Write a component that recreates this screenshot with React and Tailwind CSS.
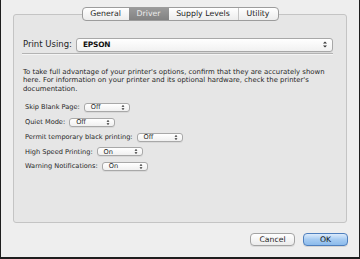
import React from "react";

const font = { fontFamily: '"DejaVu Sans", "Liberation Sans", sans-serif' };

function Arrows({ className = "" }) {
  return (
    <svg width="4" height="7" viewBox="0 0 4 7" className={className}>
      <path d="M0 2.6 L2 0.4 L4 2.6 Z" fill="#333" />
      <path d="M0 4.4 L2 6.6 L4 4.4 Z" fill="#333" />
    </svg>
  );
}

function SmallPopup({ value, width = "w-[46px]" }) {
  return (
    <div
      className={`${width} h-[9px] ml-[4px] flex items-center justify-between pl-[6px] pr-[4px] rounded-[3px] border border-[#a8a8a8] bg-gradient-to-b from-[#ffffff] to-[#f0f0f0] shadow-[0_1px_0_rgba(0,0,0,0.06)]`}
    >
      <span className="text-[6.6px] leading-none text-[#222]">{value}</span>
      <Arrows className="scale-[0.8]" />
    </div>
  );
}

function Row({ label, value }) {
  return (
    <div className="h-[14.7px] flex items-center">
      <span className="text-[6.6px] leading-none text-[#262626]">{label}</span>
      <SmallPopup value={value} />
    </div>
  );
}

export default function App() {
  return (
    <div
      style={font}
      className="w-[360px] h-[259px] bg-[#eeeeee] border-l border-r border-b-2 border-[#1e1e1e] box-border overflow-hidden"
    >
      <div className="pt-[7px] pl-[12px]">
        <div className="w-[334px] flex justify-center relative z-10 h-[14px]">
          <div className="flex h-[14px] rounded-[4px] border border-[#9c9c9c] bg-gradient-to-b from-[#ffffff] to-[#ececec] overflow-hidden text-[7.8px] leading-none text-[#1e1e1e]">
            <div className="w-[46px] flex items-center justify-center">General</div>
            <div className="w-[40px] flex items-center justify-center bg-gradient-to-b from-[#9a9a9a] to-[#828282] text-[#ececec]">
              Driver
            </div>
            <div className="w-[69px] flex items-center justify-center">Supply Levels</div>
            <div className="w-[40px] flex items-center justify-center border-l border-[#c4c4c4]">Utility</div>
          </div>
        </div>
        <div className="w-[334px] h-[209px] -mt-[7px] rounded-[3px] border border-[#c4c4c4] bg-[#e6e6e6] pt-[22px]">
          <div className="flex items-center h-[15px] pl-[9px]">
            <span className="text-[8.5px] leading-none text-[#1e1e1e] w-[53px]">Print Using:</span>
            <div className="w-[257px] h-[14px] flex items-center justify-between pl-[6px] pr-[5px] rounded-[3px] border border-[#a8a8a8] bg-gradient-to-b from-[#ffffff] to-[#f1f1f1] shadow-[0_1px_0_rgba(0,0,0,0.06)]">
              <span className="text-[7.4px] leading-none text-[#111] font-bold tracking-[-0.2px]">EPSON</span>
              <Arrows />
            </div>
          </div>
          <div className="ml-[8px] w-[311px] mt-[1px] h-[2px] border-t border-[#b3b3b3] border-b border-b-[#f4f4f4]" />
          <p className="mt-[13px] ml-[9px] w-[304px] text-[6.9px] leading-[8.3px] text-[#262626]">
            To take full advantage of your printer's options, confirm that they are accurately shown here. For information on your printer and its optional hardware, check the printer's documentation.
          </p>
          <div className="mt-[7.5px] pl-[11px] flex flex-col">
            <Row label="Skip Blank Page:" value="Off" />
            <Row label="Quiet Mode:" value="Off" />
            <Row label="Permit temporary black printing:" value="Off" />
            <Row label="High Speed Printing:" value="On" />
            <Row label="Warning Notifications:" value="On" />
          </div>
        </div>
        <div className="w-[335px] flex justify-end gap-[8px] mt-[10px]">
          <button className="w-[45px] h-[13px] flex items-center justify-center rounded-[4px] border border-[#a3a3a3] bg-gradient-to-b from-[#ffffff] to-[#ebebeb] text-[7.7px] leading-none text-[#1e1e1e] shadow-[0_1px_0_rgba(0,0,0,0.08)]">
            Cancel
          </button>
          <button className="w-[45px] h-[13px] flex items-center justify-center rounded-[4px] border border-[#4f7fbd] bg-gradient-to-b from-[#dcebfb] via-[#a6cbf1] to-[#8cbbec] text-[7.7px] leading-none text-[#111] shadow-[0_1px_0_rgba(0,0,0,0.1)]">
            OK
          </button>
        </div>
      </div>
    </div>
  );
}
